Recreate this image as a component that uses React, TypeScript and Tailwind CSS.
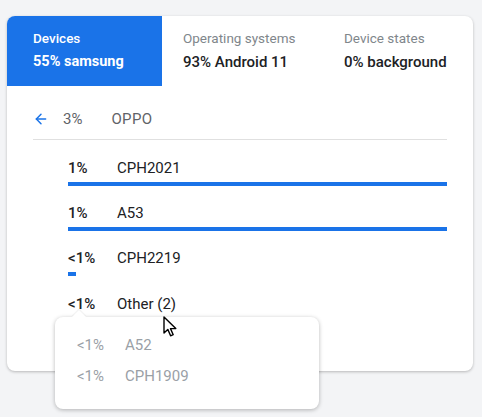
import { ArrowLeft } from "lucide-react";

const rows = [
  { pct: "1%", name: "CPH2021", bar: "w-full" },
  { pct: "1%", name: "A53", bar: "w-full" },
  { pct: "<1%", name: "CPH2219", bar: "w-[8px]" },
];

const others = [
  { pct: "<1%", name: "A52" },
  { pct: "<1%", name: "CPH1909" },
];

export default function App() {
  return (
    <div className="min-h-[417px] bg-[#f3f4f6] pt-4 pl-[7px] font-['Roboto',sans-serif]">
      <div className="relative w-[466px] h-[355px] bg-white rounded-lg shadow-[0_1px_3px_rgba(0,0,0,0.25)]">
        {/* Tabs */}
        <div className="flex h-[70px]">
          <div className="w-[155px] bg-[#1a73e8] rounded-tl-lg pl-[26px] pt-[13px] text-white">
            <div className="text-[13.5px] leading-[18px] font-medium">Devices</div>
            <div className="mt-[5px] text-[14.5px] leading-5 font-bold">55% samsung</div>
          </div>
          <div className="w-[161px] pl-[21px] pt-[13px]">
            <div className="text-[13.5px] leading-[18px] text-[#80868b]">Operating systems</div>
            <div className="mt-[5px] text-[15px] leading-5 font-medium text-[#202124]">93% Android 11</div>
          </div>
          <div className="pl-[21px] pt-[13px]">
            <div className="text-[13.5px] leading-[18px] text-[#80868b]">Device states</div>
            <div className="mt-[5px] text-[15px] leading-5 font-medium text-[#202124]">0% background</div>
          </div>
        </div>

        <div className="px-[26px] pt-[23px]">
          {/* Back row */}
          <div className="flex items-center h-5 text-[15px] text-[#5f6368]">
            <ArrowLeft className="w-[16px] h-[16px] text-[#1a73e8]" strokeWidth={2.2} />
            <span className="ml-[14px]">3%</span>
            <span className="ml-[29px] tracking-wide">OPPO</span>
          </div>
          <div className="mt-[10px] border-t border-[#e0e0e0]" />

          <div className="pl-[35px] pt-[18px]">
            {rows.map((r) => (
              <div key={r.name} className="mb-[17px]">
                <div className="flex h-5 items-center text-[15px] text-[#202124]">
                  <span className="w-[49px] font-medium">{r.pct}</span>
                  <span>{r.name}</span>
                </div>
                <div className={`mt-[4px] h-[4px] bg-[#1a73e8] ${r.bar}`} />
              </div>
            ))}

            <div className="relative pt-px">
              <div className="flex h-5 items-center text-[15px] text-[#202124]">
                <span className="w-[49px] font-medium">&lt;1%</span>
                <span>Other (2)</span>
              </div>

              {/* Tooltip */}
              <div className="absolute left-[-13px] top-[24px] w-[264px] h-[92px] bg-white rounded-lg shadow-[0_1px_4px_rgba(0,0,0,0.28)] z-10">
                <div className="absolute left-[19px] top-[-5px] w-[10px] h-[10px] bg-white rotate-45 shadow-[-1px_-1px_1px_rgba(0,0,0,0.06)]" />
                <div className="relative pt-[18px] pl-[22px] text-[15px] text-[#9aa0a6]">
                  {others.map((o) => (
                    <div key={o.name} className="flex h-5 items-center mb-[11px]">
                      <span className="w-[48px]">{o.pct}</span>
                      <span>{o.name}</span>
                    </div>
                  ))}
                </div>
              </div>

              {/* Mouse pointer */}
              <svg
                className="absolute left-[95px] top-[23px] z-20"
                width="15"
                height="21"
                viewBox="0 0 15 21"
              >
                <path
                  d="M1 1 L1 17 L4.8 13.4 L7.6 19.8 L10.2 18.7 L7.5 12.6 L12.8 12.6 Z"
                  fill="white"
                  stroke="black"
                  strokeWidth="1.4"
                  strokeLinejoin="round"
                />
              </svg>
            </div>
          </div>
        </div>
      </div>
    </div>
  );
}
